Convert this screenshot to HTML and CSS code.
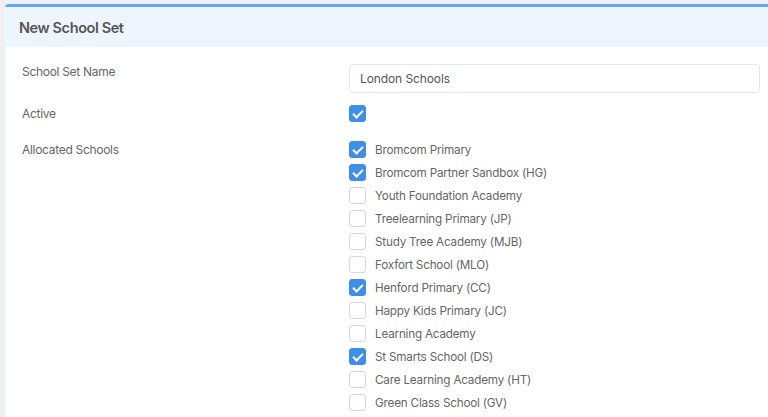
FILE: index.html
```html
<!DOCTYPE html>
<html lang="en">
<head>
  <meta charset="UTF-8" />
  <meta name="viewport" content="width=device-width, initial-scale=1.0" />
  <title>New School Set</title>
  <link rel="stylesheet" href="styles.css">
</head>
<body>

  <div class="panel">
    <div class="panel-header">
      <h1>New School Set</h1>
    </div>

    <div class="panel-body">
      <div class="form-row">
        <label class="form-label">School Set Name</label>
        <div class="form-value">
          <input class="text-input" type="text" value="London Schools">
        </div>
      </div>

      <div class="form-row row-active">
        <label class="form-label">Active</label>
        <div class="form-value">
          <span class="check checked"></span>
        </div>
      </div>

      <div class="form-row row-schools">
        <label class="form-label">Allocated Schools</label>
        <div class="form-value">
          <ul class="school-list">
            <li><span class="check checked"></span>Bromcom Primary</li>
            <li><span class="check checked"></span>Bromcom Partner Sandbox (HG)</li>
            <li><span class="check"></span>Youth Foundation Academy</li>
            <li><span class="check"></span>Treelearning Primary (JP)</li>
            <li><span class="check"></span>Study Tree Academy (MJB)</li>
            <li><span class="check"></span>Foxfort School (MLO)</li>
            <li><span class="check checked"></span>Henford Primary (CC)</li>
            <li><span class="check"></span>Happy Kids Primary (JC)</li>
            <li><span class="check"></span>Learning Academy</li>
            <li><span class="check checked"></span>St Smarts School (DS)</li>
            <li><span class="check"></span>Care Learning Academy (HT)</li>
            <li><span class="check"></span>Green Class School (GV)</li>
          </ul>
        </div>
      </div>
    </div>
  </div>

</body>
</html>
```

FILE: styles.css
```css
/* General */
body { margin: 0; font-family: Inter, "Noto Sans", sans-serif; background-color: #eef0f4; color: #666; overflow: hidden; }
ul { list-style: none; margin: 0; padding: 0; }

/* Panel */
.panel {
  margin: 4px 0 0 5px; background-color: white; border-top: 3px solid #64a5f6;
  border-top-left-radius: 4px; min-height: 420px;
}
.panel-header { background-color: #eef5fe; height: 40px; display: flex; align-items: center; padding: 0 14px; }
.panel-header h1 { margin: 0; font-size: 14.5px; letter-spacing: -0.4px; font-weight: 600; color: #555; }
.panel-body { padding: 17px 8px 0 17px; }

/* Form rows */
.form-row { display: flex; align-items: flex-start; }
.form-label { width: 327px; flex-shrink: 0; font-size: 12px; letter-spacing: -0.3px; line-height: 16px; color: #666; }
.form-value { flex: 1; }
.text-input {
  display: block; width: 100%; box-sizing: border-box; height: 29px; border: 1px solid #e4e6ea;
  border-radius: 4px; padding: 0 10px; font-family: inherit; font-size: 12px; letter-spacing: -0.1px;
  color: #555; outline: none;
}
.row-active { margin-top: 12px; }
.row-active .form-label { line-height: 17px; }
.row-active .check { margin-right: 0; }
.row-schools { margin-top: 13px; }
.row-schools .form-label { line-height: 23px; }

/* Checkboxes */
.check {
  display: inline-block; box-sizing: border-box; width: 17px; height: 17px; border: 1px solid #d6d8dc;
  border-radius: 3px; background-color: white; position: relative; margin-right: 9px; flex-shrink: 0; vertical-align: top;
}
.check.checked { background-color: #3f8fe9; border-color: #3f8fe9; }
.check.checked::after {
  content: ""; position: absolute; left: 5px; top: 2px; width: 4px; height: 8px;
  border: solid white; border-width: 0 2px 2px 0; transform: rotate(45deg);
}
.school-list li { display: flex; align-items: center; height: 23px; font-size: 11.7px; letter-spacing: -0.2px; color: #666; }
```
